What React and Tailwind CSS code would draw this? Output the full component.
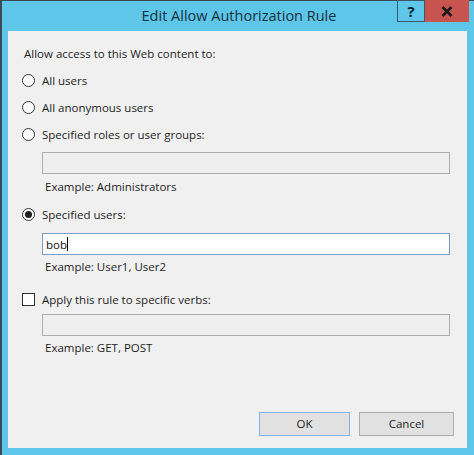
import React, { useState } from 'react';

const font = { fontFamily: '"Open Sans", "Liberation Sans", sans-serif' };

const Radio = ({ checked, onChange, children }) => (
  <label className="flex items-center h-[20px] cursor-default" onClick={onChange}>
    <span className="w-[13px] h-[13px] rounded-full border border-[#333] bg-white flex items-center justify-center ml-[14px]">
      {checked && <span className="w-[7px] h-[7px] rounded-full bg-[#222]" />}
    </span>
    <span className="ml-[7px] text-[11.5px] text-[#1e1e1e]">{children}</span>
  </label>
);

const Field = ({ value, disabled }) => (
  <div
    className={
      disabled
        ? 'ml-[34px] mr-[17px] h-[22px] border border-[#adadad] bg-[#efefef]'
        : 'ml-[34px] mr-[17px] h-[22px] border border-[#7a9bc7] bg-white flex items-center pl-[3px] text-[11.5px] text-[#111]'
    }
  >
    {!disabled && (
      <>
        {value}
        <span className="w-px h-[14px] bg-black" />
      </>
    )}
  </div>
);

const Hint = ({ children }) => (
  <div className="ml-[37px] text-[11.5px] text-[#1e1e1e] leading-[16px]">{children}</div>
);

export default function App() {
  const [who, setWho] = useState('users');
  const [verbs, setVerbs] = useState(false);

  return (
    <div style={font} className="w-[474px] h-[455px] bg-[#5ec6e8] border-l-2 border-t border-[#3a4b56] flex flex-col">
      {/* title bar */}
      <div className="relative h-[30px] flex items-center justify-center">
        <span className="text-[14.5px] text-[#16323f] pl-[2px]">Edit Allow Authorization Rule</span>
        <div className="absolute top-[-1px] right-[5px] flex">
          <div className="w-[28px] h-[22px] border border-[#3c5866] bg-[#5ec6e8] flex items-center justify-center text-[15px] font-bold text-[#0f1f2a]">?</div>
          <div className="w-[44px] h-[22px] bg-[#c8544f] flex items-center justify-center">
            <svg width="12" height="11" viewBox="0 0 12 11">
              <path d="M1.5 1 L10.5 10 M10.5 1 L1.5 10" stroke="#1a1a1a" strokeWidth="2.6" />
            </svg>
          </div>
        </div>
      </div>

      {/* client area */}
      <div className="ml-[6px] mr-[7px] mb-[7px] flex-1 bg-[#f0f0f0] flex flex-col">
        <div className="mt-[14px] ml-[16px] text-[11.5px] text-[#1e1e1e]">Allow access to this Web content to:</div>

        <div className="mt-[8px] flex flex-col gap-[7px]">
          <Radio checked={who === 'all'} onChange={() => setWho('all')}>All users</Radio>
          <Radio checked={who === 'anon'} onChange={() => setWho('anon')}>All anonymous users</Radio>
          <Radio checked={who === 'roles'} onChange={() => setWho('roles')}>Specified roles or user groups:</Radio>
        </div>
        <div className="mt-[8px]">
          <Field disabled />
        </div>
        <div className="mt-[5px]">
          <Hint>Example: Administrators</Hint>
        </div>

        <div className="mt-[9px]">
          <Radio checked={who === 'users'} onChange={() => setWho('users')}>Specified users:</Radio>
        </div>
        <div className="mt-[9px]">
          <Field value="bob" />
        </div>
        <div className="mt-[4px]">
          <Hint>Example: User1, User2</Hint>
        </div>

        <label className="mt-[14px] flex items-center h-[20px]" onClick={() => setVerbs(!verbs)}>
          <span className="ml-[14px] w-[13px] h-[13px] border border-[#333] bg-white" />
          <span className="ml-[7px] text-[11.5px] text-[#1e1e1e]">Apply this rule to specific verbs:</span>
        </label>
        <div className="mt-[5px]">
          <Field disabled />
        </div>
        <div className="mt-[4px]">
          <Hint>Example: GET, POST</Hint>
        </div>

        <div className="mt-auto mb-[12px] flex justify-end gap-[9px] mr-[13px]">
          <button className="w-[91px] h-[24px] border border-[#7eb4ea] bg-[#e1e1e1] text-[11.5px] text-[#1e1e1e]">OK</button>
          <button className="w-[95px] h-[24px] border border-[#adadad] bg-[#e1e1e1] text-[11.5px] text-[#1e1e1e]">Cancel</button>
        </div>
      </div>
    </div>
  );
}
